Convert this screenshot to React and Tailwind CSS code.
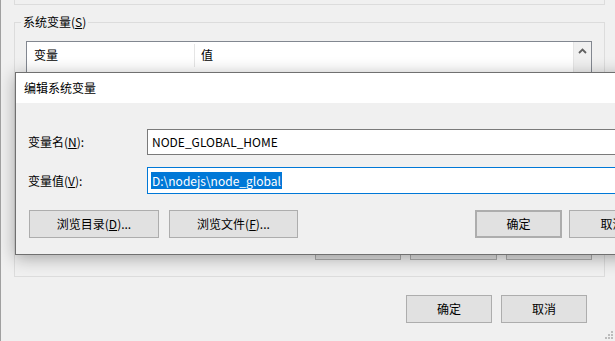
import React from "react";

const font = { fontFamily: '"Noto Sans CJK SC", "Noto Sans", sans-serif' };

const Btn = ({ children, className = "" }) => (
  <div
    className={`flex items-center justify-center bg-[#e1e1e1] border border-[#adadad] text-[12px] text-black ${className}`}
  >
    {children}
  </div>
);

const App = () => {
  return (
    <div
      className="relative w-[615px] h-[341px] overflow-hidden bg-[#f0f0f0] text-[12px] text-black border-l border-[#a0a0a0]"
      style={font}
    >
      {/* background window: environment variables */}
      <div className="ml-[13px] w-[591px] h-[5px] border-x border-b border-[#dcdcdc]" />

      <div className="ml-[13px] mt-[17px] w-[591px] border border-[#dcdcdc]">
        <div className="-mt-[9px] ml-[6px] w-fit px-[2px] bg-[#f0f0f0] leading-[16px]">
          系统变量(<u>S</u>)
        </div>

        <div className="ml-[11px] mt-[11px] w-[566px] h-[184px] border border-[#828790] bg-white flex">
          <div className="flex-1 flex flex-col">
            <div className="h-[26px] flex items-center">
              <div className="w-[168px] h-[23px] flex items-center pl-[7px] border-r border-[#e5e5e5]">变量</div>
              <div className="pl-[6px]">值</div>
            </div>
          </div>
          <div className="w-[18px] bg-[#f0f0f0] border-l border-[#e5e5e5] flex justify-center pt-[6px]">
            <svg width="9" height="6" viewBox="0 0 9 6">
              <path d="M1 5 L4.5 1.5 L8 5" stroke="#606060" strokeWidth="1.8" fill="none" />
            </svg>
          </div>
        </div>

        <div className="mt-[8px] mr-[12px] flex justify-end gap-[9px]">
          <Btn className="w-[86px] h-[27px]">新建</Btn>
          <Btn className="w-[87px] h-[27px]">编辑</Btn>
          <Btn className="w-[86px] h-[27px]">删除</Btn>
        </div>
        <div className="h-[16px]" />
      </div>

      <div className="mt-[18px] mr-[28px] flex justify-end gap-[9px]">
        <Btn className="w-[86px] h-[28px]">确定</Btn>
        <Btn className="w-[86px] h-[28px]">取消</Btn>
      </div>

      {/* resize grip */}
      <svg className="absolute right-[1px] bottom-[1px]" width="10" height="10" viewBox="0 0 10 10">
        <rect x="7" y="1" width="2" height="2" fill="#bcbcbc" />
        <rect x="4" y="4" width="2" height="2" fill="#bcbcbc" />
        <rect x="7" y="4" width="2" height="2" fill="#bcbcbc" />
        <rect x="1" y="7" width="2" height="2" fill="#bcbcbc" />
        <rect x="4" y="7" width="2" height="2" fill="#bcbcbc" />
        <rect x="7" y="7" width="2" height="2" fill="#bcbcbc" />
      </svg>

      {/* edit dialog */}
      <div className="absolute left-[14px] top-[72px] w-[653px] h-[183px] border border-[#707070] bg-[#f0f0f0] flex flex-col shadow-[0_3px_16px_rgba(0,0,0,0.32)]">
        <div className="h-[30px] bg-white flex items-center pl-[8px]">编辑系统变量</div>

        <div className="pt-[26px] pl-[12px] pr-[12px] flex flex-col">
          <div className="flex items-center">
            <div className="w-[119px]">变量名(<u>N</u>):</div>
            <div className="flex-1 h-[26px] border border-[#7a7a7a] bg-white flex items-center pl-[4px]">
              NODE_GLOBAL_HOME
            </div>
          </div>
          <div className="flex items-center mt-[12px]">
            <div className="w-[119px]">变量值(<u>V</u>):</div>
            <div className="flex-1 h-[27px] border border-[#0078d7] bg-white flex items-center pl-[3px]">
              <span className="bg-[#0078d7] text-white leading-[17px] px-[1px]">D:\nodejs\node_global</span>
            </div>
          </div>
        </div>

        <div className="mt-[16px] pl-[13px] pr-[11px] flex items-center">
          <Btn className="w-[130px] h-[28px]">
            <span>浏览目录(<u>D</u>)...</span>
          </Btn>
          <Btn className="ml-[10px] w-[129px] h-[28px]">
            <span>浏览文件(<u>F</u>)...</span>
          </Btn>
          <Btn className="ml-auto w-[87px] h-[28px] border-2 border-[#0078d7]">确定</Btn>
          <Btn className="ml-[7px] w-[87px] h-[28px]">取消</Btn>
        </div>
      </div>
    </div>
  );
};

export default App;
